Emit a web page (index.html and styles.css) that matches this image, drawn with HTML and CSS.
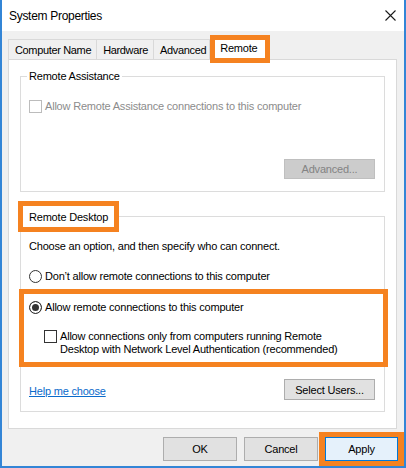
FILE: index.html
```html
<!DOCTYPE html>
<html lang="en">
<head>
<meta charset="utf-8">
<title>System Properties</title>
<link rel="stylesheet" href="styles.css">
</head>
<body>
<div class="window">
  <header class="titlebar">
    <span class="title">System Properties</span>
    <svg class="close" width="11" height="11" viewBox="0 0 11 11" aria-label="Close"><path d="M0.5 0.5 L10.5 10.5 M10.5 0.5 L0.5 10.5" stroke="#1a1a1a" stroke-width="1.1" fill="none"/></svg>
  </header>
  <main class="content">
    <nav class="tabs">
      <span class="tab">Computer Name</span>
      <span class="tab">Hardware</span>
      <span class="tab last">Advanced</span>
      <span class="tab active">Remote</span>
    </nav>
    <section class="panel">
      <fieldset class="group assist">
        <legend>Remote Assistance</legend>
        <label class="check disabled"><span class="box"></span>Allow Remote Assistance connections to this computer</label>
        <div class="btn-row"><button class="btn small" disabled>Advanced...</button></div>
      </fieldset>
      <fieldset class="group desktop">
        <legend class="hl">Remote Desktop</legend>
        <p class="intro">Choose an option, and then specify who can connect.</p>
        <label class="radio first"><span class="dot"></span>Don’t allow remote connections to this computer</label>
        <div class="highlight">
          <label class="radio on"><span class="dot"></span>Allow remote connections to this computer</label>
          <label class="check nla"><span class="box"></span><span>Allow connections only from computers running Remote<br>Desktop with Network Level Authentication (recommended)</span></label>
        </div>
        <div class="footer-row"><a class="link" href="#">Help me choose</a><button class="btn small">Select Users...</button></div>
      </fieldset>
    </section>
    <div class="actions">
      <button class="btn wide">OK</button>
      <button class="btn wide">Cancel</button>
      <div class="apply-hl"><button class="btn wide primary">Apply</button></div>
    </div>
  </main>
</div>
</body>
</html>
```
FILE: styles.css
```css
* { box-sizing: border-box; }
html, body { margin: 0; padding: 0; }
body {
  width: 406px;
  height: 468px;
  font-family: "Liberation Sans", Arial, sans-serif;
  font-size: 11px;
  letter-spacing: -0.2px;
  color: #000;
  background: #fff;
}
.window {
  width: 406px;
  height: 468px;
  display: flex;
  flex-direction: column;
  border: 2px solid #3385d6;
  border-top: 0;
  background: #f0f0f0;
}
.titlebar {
  height: 31px;
  flex: none;
  background: #fff;
  display: flex;
  align-items: center;
  justify-content: space-between;
  padding: 0 8px 0 7px;
}
.title { font-size: 12px; letter-spacing: -0.3px; line-height: 14px; padding-top: 1px; }
.close { display: block; }

.content {
  flex: 1;
  display: flex;
  flex-direction: column;
  padding: 4px 7px 0 6px;
  min-height: 0;
}
.tabs {
  flex: none;
  height: 24px;
  display: flex;
  align-items: flex-end;
}
.tab {
  height: 20px;
  padding: 0 5px 0 6px;
  border: 1px solid #d9d9d9;
  border-right: 0;
  border-bottom: 0;
  display: flex;
  align-items: center;
  line-height: 14px;
  letter-spacing: -0.35px;
  background: #f0f0f0;
}
.tab.last { border-right: 1px solid #d9d9d9; padding-right: 3px; }
.tab.active {
  height: 28px;
  margin-bottom: -4px;
  border: 5px solid #f58220;
  background: #fff;
  padding: 0 7px 2px 5px;
  letter-spacing: -0.2px;
  position: relative;
  z-index: 1;
}
.panel {
  flex: 1;
  background: #fff;
  border: 1px solid #d9d9d9;
  padding: 9px 11px 0;
}
.group {
  margin: 0;
  min-width: 0;
  border: 1px solid #dcdcdc;
  padding: 16px 9px 12px 8px;
}
.group legend {
  padding: 0 2px;
  margin-left: -2px;
  line-height: 14px;
}
.group legend.hl {
  border: 5px solid #f58220;
  padding: 4px 6px 3px;
  margin-left: -11px;
  background: #fff;
}
.check, .radio {
  display: flex;
  align-items: center;
  gap: 3px;
  line-height: 14px;
}
.box {
  flex: none;
  width: 13px;
  height: 13px;
  border: 1px solid #333;
  background: #fff;
}
.check.disabled { color: #8c8c8c; }
.check.disabled .box { border-color: #bcbcbc; }
.dot {
  flex: none;
  width: 13px;
  height: 13px;
  border: 1px solid #333;
  border-radius: 50%;
  background: #fff;
}
.radio.on .dot { background: #333; box-shadow: inset 0 0 0 2px #fff; }

.btn {
  font: inherit;
  letter-spacing: inherit;
  color: #000;
  background: #e1e1e1;
  border: 1px solid #adadad;
  padding: 0;
  margin: 0;
}
.btn.small { width: 91px; height: 21px; }
.btn:disabled { background: #cccccc; border-color: #bfbfbf; color: #838383; height: 20px; }
.btn-row { display: flex; justify-content: flex-end; margin-top: 46px; }

.desktop { margin-top: 9px; padding: 7px 9px 11px 8px; }
.intro { margin: 0; line-height: 14px; }
.radio.first { margin-top: 16px; }
.highlight {
  margin: 6px -13px 0 -10px;
  border: 5px solid #f58220;
  padding: 6px 0 6px 5px;
}
.check.nla {
  align-items: flex-start;
  margin: 16px 0 0 15px;
  line-height: 13px;
}
.footer-row {
  display: flex;
  justify-content: space-between;
  align-items: center;
  margin-top: 12px;
}
.link { color: #0b6bcb; text-decoration: underline; line-height: 14px; padding-top: 2px; }

.actions {
  flex: none;
  height: 34px;
  margin: 3px -7px 0 0;
  display: flex;
  justify-content: flex-end;
  align-items: center;
  gap: 7px;
}
.btn.wide { width: 74px; height: 24px; }
.apply-hl {
  height: 34px;
  border: 5px solid #f58220;
  border-left-width: 6px;
  border-right-width: 6px;
  margin-left: -6px;
  display: flex;
}
.btn.primary { width: 73px; background: #e5f1fb; border-color: #0078d7; }
```
